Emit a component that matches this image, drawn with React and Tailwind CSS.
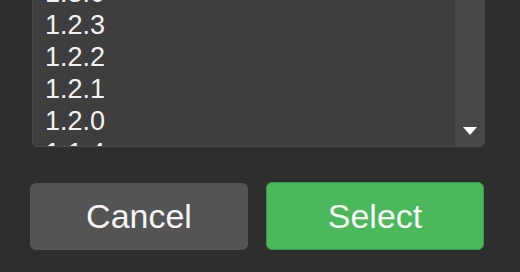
export default function App() {
  const items = ["1.3.0", "1.2.3", "1.2.2", "1.2.1", "1.2.0", "1.1.4"];
  return (
    <div
      className="w-[520px] h-[272px] overflow-hidden bg-[#2e2e2e] flex flex-col px-[30px] text-[#f2f2f2]"
      style={{ fontFamily: '"Liberation Sans", Arial, sans-serif' }}
    >
      <div className="mt-[-32px] ml-[2px] w-[453px] h-[179px] shrink-0 flex overflow-hidden rounded-b-[5px] border border-[#4a4a4a] bg-[#3e3e3e]">
        <div className="flex-1 flex flex-col pt-[8px] pl-[12px]">
          {items.map((v) => (
            <div key={v} className="text-[27px] leading-[32px]">
              {v}
            </div>
          ))}
        </div>
        <div className="w-[29px] bg-[#474747] flex flex-col justify-end items-center pb-[11px]">
          <svg width="14" height="8" viewBox="0 0 14 8">
            <polygon points="0,0 14,0 7,8" fill="#ffffff" />
          </svg>
        </div>
      </div>
      <div className="mt-[36px] flex gap-[18px]">
        <button className="w-[218px] h-[67px] rounded-[6px] bg-[#545454] text-[34px] text-[#f5f5f5] flex items-center justify-center">
          Cancel
        </button>
        <button className="w-[218px] h-[68px] mt-[-1px] rounded-[6px] bg-[#4cb85c] border border-[#3a9a48] text-[34px] text-[#f5f5f5] flex items-center justify-center">
          Select
        </button>
      </div>
    </div>
  );
}
